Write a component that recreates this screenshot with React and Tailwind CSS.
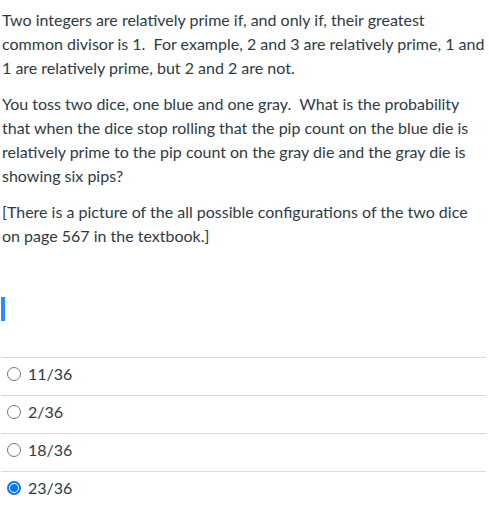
import React from 'react';

const options = [
    { label: '11/36', checked: false },
    { label: '2/36', checked: false },
    { label: '18/36', checked: false },
    { label: '23/36', checked: true },
];

function Radio({ checked }) {
    if (checked) {
        return (
            <span className="w-[14px] h-[14px] rounded-full border-2 border-[#0b74ff] flex items-center justify-center shrink-0">
                <span className="w-[8px] h-[8px] rounded-full bg-[#0b74ff]"></span>
            </span>
        );
    }
    return <span className="w-[14px] h-[14px] rounded-full border border-[#767676] shrink-0"></span>;
}

export default function App() {
    return (
        <div className="w-[489px] h-[520px] bg-white text-[#2d3b45] text-[16px] leading-6 pt-2 pl-[2px] pr-[3px]" style={{ fontFamily: 'Lato, "Liberation Sans", sans-serif' }}>
            <p className="mb-3">
                Two integers are relatively prime if, and only if, their greatest common divisor is 1.&nbsp; For example, 2 and 3 are relatively prime, 1 and 1 are relatively prime, but 2 and 2 are not.
            </p>
            <p className="mb-3">
                You toss two dice, one blue and one gray.&nbsp; What is the probability that when the dice stop rolling that the pip count on the blue die is relatively prime to the pip count on the gray die and the gray die is showing six pips?
            </p>
            <p>
                [There is a picture of the all possible configurations of the two dice on page 567 in the textbook.]
            </p>

            <div className="mt-[49px] ml-[-1px] w-[4px] h-6 bg-[#2b8cff]"></div>

            <div className="mt-[36px] ml-[-1px]">
                {options.map((opt) => (
                    <div key={opt.label} className="border-t border-[#dadada] h-[38px] flex items-center gap-[7px] pl-[6px] pb-[6px]">
                        <Radio checked={opt.checked} />
                        <span className="leading-none">{opt.label}</span>
                    </div>
                ))}
            </div>
        </div>
    );
}
